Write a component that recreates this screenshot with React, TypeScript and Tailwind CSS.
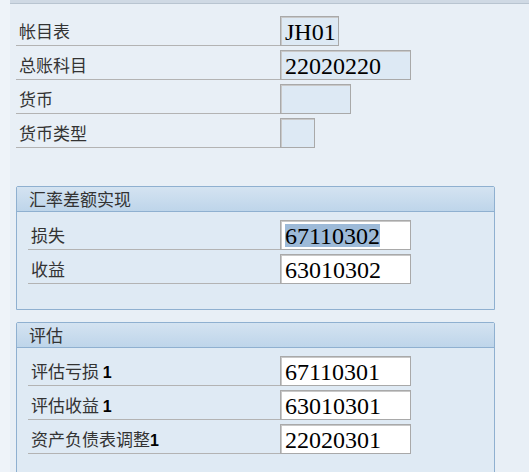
import React from "react";

const cjk = "font-['Noto_Sans_CJK_SC','Noto_Sans',sans-serif]";
const serif = "font-['Liberation_Serif','Times_New_Roman',serif]";

function Field({
  value,
  width,
  white,
  selected,
}: {
  value?: string;
  width: string;
  white?: boolean;
  selected?: boolean;
}) {
  return (
    <div
      className={`h-[30px] ${width} shrink-0 border border-[#a9a9a9] shadow-[inset_1px_1px_0_#c8c8c8] ${
        white ? "bg-white" : "bg-[#dde9f4]"
      } flex items-center pl-[4px] pt-[1px] ${serif} text-[24px] leading-none text-black overflow-hidden whitespace-nowrap`}
    >
      {selected ? (
        <span className="inline-block h-[23px] leading-[24px] bg-[#9dbad8]">{value}</span>
      ) : (
        value
      )}
    </div>
  );
}

function Row({
  label,
  labelWidth,
  children,
}: {
  label: React.ReactNode;
  labelWidth: string;
  children: React.ReactNode;
}) {
  return (
    <div className="flex h-[34px] items-end">
      <div
        className={`${labelWidth} h-full shrink-0 border-b border-[#b3b3b3] flex items-center pt-[4px] pl-[3px] ${cjk} text-[17px] text-[#333] whitespace-nowrap`}
      >
        {label}
      </div>
      {children}
    </div>
  );
}

function One() {
  return (
    <span className="relative top-[2px] font-['Liberation_Sans',Arial,sans-serif] font-bold text-[16px] text-black">
      1
    </span>
  );
}

function Group({ title, children, bottom }: { title: string; children: React.ReactNode; bottom?: string }) {
  return (
    <div className={`ml-[6px] w-[479px] border border-[#8fb0d0] rounded-t-[2px] bg-[#dfeaf4] ${bottom ?? ""}`}>
      <div
        className={`h-[25px] border-b border-[#8fb0d0] bg-gradient-to-b from-[#d4e3f1] to-[#bed5ea] flex items-center pl-[12px] ${cjk} text-[17px] text-[#333]`}
      >
        {title}
      </div>
      <div className="pt-[4px] pl-[11px]">{children}</div>
    </div>
  );
}

export default function App() {
  return (
    <div className="w-[529px] h-[472px] overflow-hidden flex bg-[#e8eff6]">
      <div className="w-[10px] shrink-0 bg-[#eef3f9]" />
      <div className="flex-1 flex flex-col">
        <div className="h-[4px] shrink-0 bg-[#cfd9e4] border-b border-[#b8c4d0]" />
        <div className="pt-[8px] pl-[6px]">
          <Row label="帐目表" labelWidth="w-[264px]">
            <Field value="JH01" width="w-[59px]" />
          </Row>
          <Row label="总账科目" labelWidth="w-[264px]">
            <Field value="22020220" width="w-[131px]" />
          </Row>
          <Row label="货币" labelWidth="w-[264px]">
            <Field width="w-[71px]" />
          </Row>
          <Row label="货币类型" labelWidth="w-[264px]">
            <Field width="w-[35px]" />
          </Row>
        </div>
        <div className="h-[38px] shrink-0" />
        <Group title="汇率差额实现" bottom="pb-[25px]">
          <Row label="损失" labelWidth="w-[252px]">
            <Field value="67110302" width="w-[131px]" white selected />
          </Row>
          <Row label="收益" labelWidth="w-[252px]">
            <Field value="63010302" width="w-[131px]" white />
          </Row>
        </Group>
        <div className="h-[12px] shrink-0" />
        <Group title="评估" bottom="pb-[40px]">
          <Row
            label={
              <>
                评估亏损&nbsp;<One />
              </>
            }
            labelWidth="w-[252px]"
          >
            <Field value="67110301" width="w-[131px]" white />
          </Row>
          <Row
            label={
              <>
                评估收益&nbsp;<One />
              </>
            }
            labelWidth="w-[252px]"
          >
            <Field value="63010301" width="w-[131px]" white />
          </Row>
          <Row
            label={
              <>
                资产负债表调整<One />
              </>
            }
            labelWidth="w-[252px]"
          >
            <Field value="22020301" width="w-[131px]" white />
          </Row>
        </Group>
      </div>
    </div>
  );
}
